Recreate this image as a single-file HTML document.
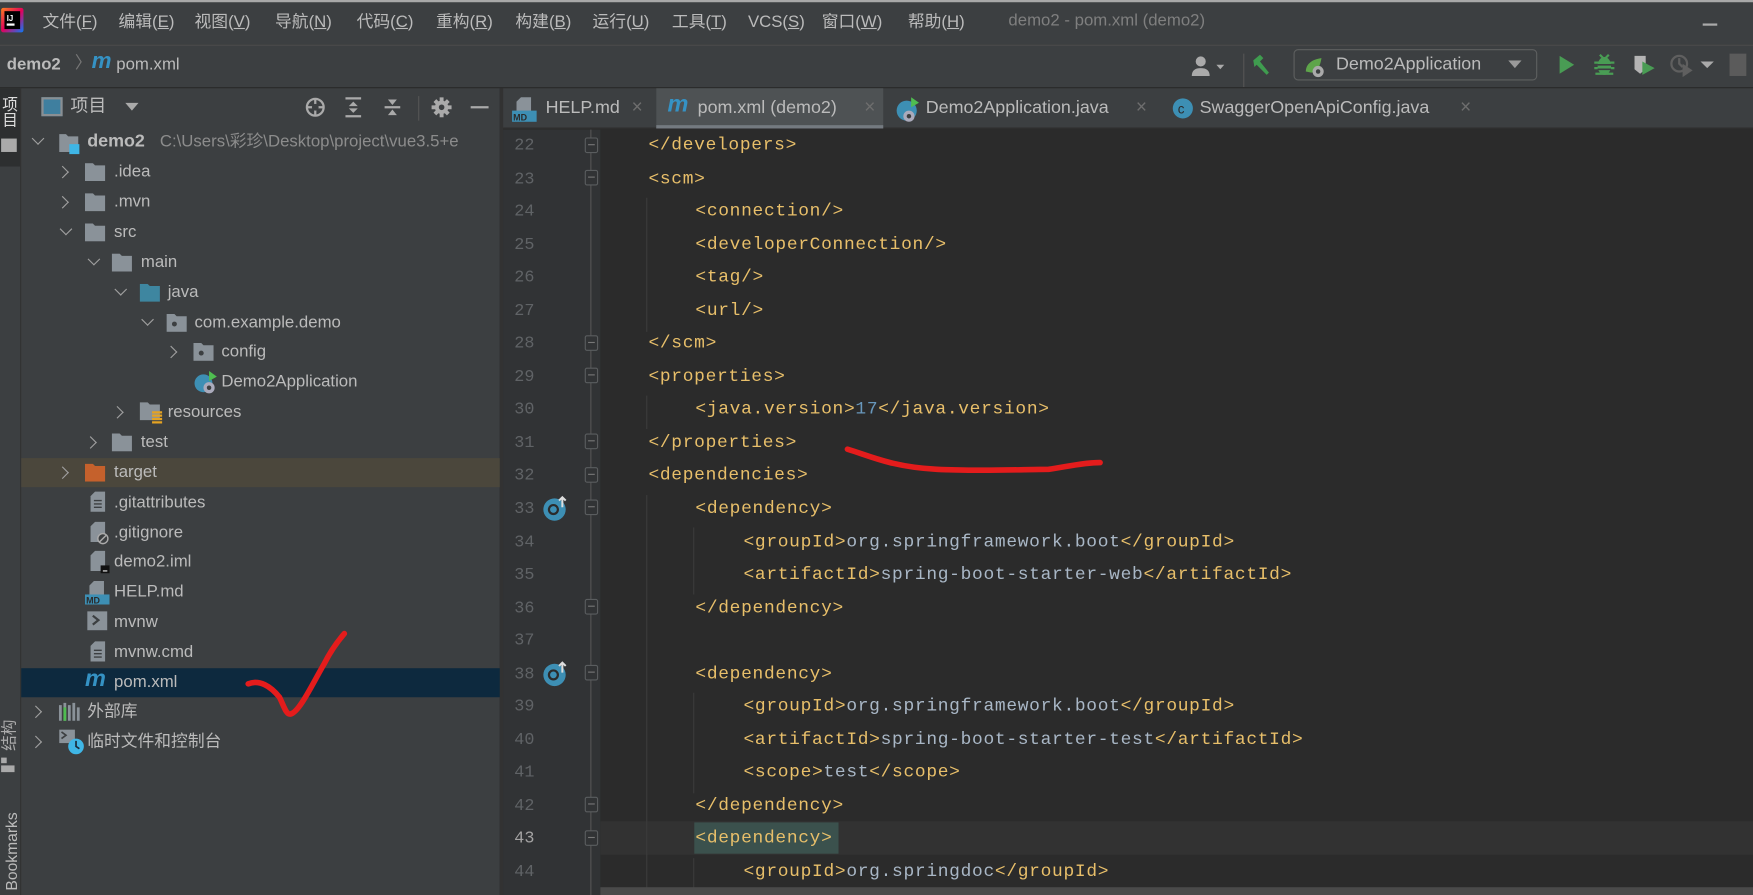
<!DOCTYPE html>
<html><head><meta charset="utf-8"><style>
*{margin:0;padding:0;box-sizing:border-box}
html,body{width:1753px;height:895px;overflow:hidden;background:#2b2b2b}
#w{position:absolute;left:0;top:0;width:1568px;height:801px;transform:scale(1.118,1.1174);transform-origin:0 0;background:#2b2b2b;font-family:"Liberation Sans","Noto Sans CJK SC",sans-serif;color:#bbbbbb;font-size:15px}
.a{position:absolute}
.t{position:absolute;white-space:nowrap;line-height:20px}
.mono{font-family:"Liberation Mono",monospace;font-size:16px;letter-spacing:0.62px;color:#e8bf6a}
.v{color:#a9b7c6}
.ln{position:absolute;left:452px;width:26px;text-align:right;font-family:"Liberation Mono",monospace;font-size:15px;color:#606366;line-height:20px}
.chev{position:absolute;width:8px;height:8px;border-right:1.6px solid #a0a0a0;border-bottom:1.6px solid #a0a0a0}
.cr{transform:rotate(-45deg)}
.cd{transform:rotate(45deg)}
.fold{position:absolute;left:523px;width:12px;height:14px;border:1.3px solid #5a5d5f;background:#313335;border-radius:2px}
.fold:after{content:"";position:absolute;left:2px;top:5px;width:6px;height:1.3px;background:#777}
</style></head><body><div id="w">
<!-- menu bar -->
<div class="a" style="left:0;top:0;width:1568px;height:40px;background:#3c3f41"></div>
<div class="a" style="left:0;top:0;width:1568px;height:2px;background:#a8a8a8"></div>
<div class="a" style="left:1px;top:7px;width:20px;height:22px;background:linear-gradient(135deg,#fc801d,#e3005b 50%,#087cfa);border-radius:2px"></div>
<div class="a" style="left:4px;top:10px;width:14px;height:16px;background:#000"></div>
<div class="a" style="left:6px;top:21px;width:7px;height:1.5px;background:#fff"></div>
<div class="t" style="left:6px;top:8px;font-size:7px;color:#fff;font-weight:bold">IJ</div>
<div class="t" style="left:38px;top:10px">文件(<u>F</u>)</div>
<div class="t" style="left:106px;top:10px">编辑(<u>E</u>)</div>
<div class="t" style="left:174px;top:10px">视图(<u>V</u>)</div>
<div class="t" style="left:246px;top:10px">导航(<u>N</u>)</div>
<div class="t" style="left:319px;top:10px">代码(<u>C</u>)</div>
<div class="t" style="left:390px;top:10px">重构(<u>R</u>)</div>
<div class="t" style="left:461px;top:10px">构建(<u>B</u>)</div>
<div class="t" style="left:530px;top:10px">运行(<u>U</u>)</div>
<div class="t" style="left:601px;top:10px">工具(<u>T</u>)</div>
<div class="t" style="left:669px;top:10px">VCS(<u>S</u>)</div>
<div class="t" style="left:735px;top:10px">窗口(<u>W</u>)</div>
<div class="t" style="left:812px;top:10px">帮助(<u>H</u>)</div>
<div class="t" style="left:902px;top:9px;color:#7f7f7f">demo2 - pom.xml (demo2)</div>
<div class="a" style="left:1523px;top:21px;width:13px;height:1.5px;background:#aaa"></div>
<div class="a" style="left:0;top:40px;width:1568px;height:1px;background:#515151"></div>
<!-- breadcrumb bar -->
<div class="a" style="left:0;top:41px;width:1568px;height:37px;background:#3c3f41"></div>
<div class="t" style="left:6px;top:48px;font-weight:bold;color:#bbb">demo2</div>
<div class="t" style="left:67px;top:47px;color:#777">〉</div>
<div class="t" style="left:82px;top:45px;color:#3592c4;font-weight:bold;font-style:italic;font-size:20px">m</div>
<div class="t" style="left:104px;top:48px">pom.xml</div>
<!-- toolbar right -->
<svg class="a" style="left:1062px;top:46px" width="40" height="28"><circle cx="12" cy="9" r="4.5" fill="#aaa"/><path d="M4 22c0-5 3-7 8-7s8 2 8 7z" fill="#aaa"/><path d="M26 12h7l-3.5 4z" fill="#aaa"/></svg>
<div class="a" style="left:1112px;top:48px;width:1px;height:30px;background:#555"></div>
<svg class="a" style="left:1118px;top:46px" width="24" height="26"><path d="M3 8l6-5 3 3-3 3 8 10-2 2-9-9-2 2z" fill="#3f9c4f"/></svg>
<div class="a" style="left:1157px;top:44px;width:218px;height:28px;border:1px solid #5e6060;border-radius:4px;background:#3c3f41"></div>
<svg class="a" style="left:1166px;top:49px" width="22" height="22"><path d="M2 15c0-7 6-11 14-12-1 6-3 12-9 13z" fill="#5ea54a"/><circle cx="13" cy="15" r="5" fill="#aaa"/><circle cx="13" cy="15" r="2" fill="#3c3f41"/></svg>
<div class="t" style="left:1195px;top:48px;font-size:16px">Demo2Application</div>
<svg class="a" style="left:1349px;top:54px" width="12" height="8"><path d="M0 0h12l-6 7z" fill="#9a9a9a"/></svg>
<svg class="a" style="left:1393px;top:49px" width="16" height="18"><path d="M2 1l13 8-13 8z" fill="#499c54"/></svg>
<svg class="a" style="left:1425px;top:47px" width="20" height="22"><ellipse cx="10" cy="12" rx="6" ry="8" fill="#499c54"/><path d="M1 9h18M1 14h18M2 19h16M6 2l3 3M14 2l-3 3" stroke="#499c54" stroke-width="2"/><path d="M4 11h12M4 15h12" stroke="#3c3f41" stroke-width="1.5"/></svg>
<svg class="a" style="left:1459px;top:47px" width="24" height="22"><path d="M3 3h10v12l-5 4-5-4z" fill="#b4b4b4"/><path d="M10 8l11 6-11 6z" fill="#499c54"/></svg>
<svg class="a" style="left:1492px;top:47px" width="26" height="24"><circle cx="10" cy="10" r="7" stroke="#5f5f5f" stroke-width="2" fill="none"/><path d="M10 5v5l3 3" stroke="#5f5f5f" stroke-width="2" fill="none"/><path d="M13 10l9 6-9 6z" fill="#5f5f5f"/></svg>
<svg class="a" style="left:1521px;top:55px" width="12" height="8"><path d="M0 0h12l-6 6z" fill="#aaa"/></svg>
<div class="a" style="left:1547px;top:48px;width:15px;height:20px;background:#5b5b5b"></div>
<div class="a" style="left:0;top:78px;width:1568px;height:1px;background:#2b2b2b"></div>
<!-- left stripe -->
<div class="a" style="left:0;top:79px;width:19px;height:722px;background:#3c3f41;border-right:1px solid #323232"></div>
<div class="a" style="left:0;top:79px;width:18px;height:70px;background:#2d2f30"></div>
<div class="a" style="left:0;top:86px;writing-mode:vertical-rl;font-size:14px;line-height:18px;color:#ddd">项目</div>
<div class="a" style="left:1px;top:124px;width:14px;height:12px;background:#aaa"></div>
<div class="t" style="left:-6px;top:648px;transform:rotate(-90deg);font-size:14px;color:#aaa">结构</div>
<div class="a" style="left:1px;top:678px;width:5px;height:5px;background:#aaa"></div><div class="a" style="left:1px;top:685px;width:12px;height:6px;background:#aaa"></div>
<div class="t" style="left:-32px;top:745px;transform:rotate(-90deg);font-size:14px;color:#bbb;width:84px">Bookmarks</div>
<!-- project panel -->
<div class="a" style="left:19px;top:79px;width:428px;height:722px;background:#3c3f41"></div>
<div class="a" style="left:447px;top:79px;width:3px;height:722px;background:#323232"></div>
<div class="a" style="left:37px;top:87px;width:19px;height:17px;border:2px solid #8a8f93;background:#3f7f9f"></div>
<div class="t" style="left:63px;top:86px;font-size:16px">项目</div>
<svg class="a" style="left:112px;top:92px" width="12" height="8"><path d="M0 0h12l-6 7z" fill="#aaa"/></svg>
<svg class="a" style="left:272px;top:86px" width="20" height="20"><circle cx="10" cy="10" r="7.5" stroke="#aaa" stroke-width="2" fill="none"/><path d="M10 2v16M2 10h16" stroke="#aaa" stroke-width="2"/><circle cx="10" cy="10" r="3" fill="#3c3f41"/></svg>
<svg class="a" style="left:307px;top:86px" width="18" height="20"><path d="M2 2h14M2 18h14" stroke="#aaa" stroke-width="2"/><path d="M9 5l-4 4h8zM9 15l-4-4h8z" fill="#aaa"/></svg>
<svg class="a" style="left:342px;top:86px" width="18" height="20"><path d="M2 10h14" stroke="#aaa" stroke-width="2"/><path d="M9 8l-4-5h8zM9 12l-4 5h8z" fill="#aaa"/></svg>
<div class="a" style="left:374px;top:86px;width:1px;height:22px;background:#555"></div>
<svg class="a" style="left:386px;top:87px" width="18" height="18"><circle cx="9" cy="9" r="6" fill="#aaa"/><path d="M9 0v18M0 9h18M3 3l12 12M15 3L3 15" stroke="#aaa" stroke-width="3.5"/><circle cx="9" cy="9" r="2.5" fill="#3c3f41"/></svg>
<div class="a" style="left:421px;top:95px;width:16px;height:2px;background:#aaa"></div>
<!-- highlights -->
<div class="a" style="left:19px;top:410px;width:428px;height:26px;background:#4b473c"></div>
<div class="a" style="left:19px;top:598px;width:428px;height:26px;background:#0d293e"></div>
<!-- tree rows -->
<div class="chev cd" style="left:30px;top:120px"></div>
<svg class="a" style="left:52px;top:118px" width="22" height="20"><path d="M1 2h6l2 2h9v14H1z" fill="#8a9299"/><rect x="10" y="11" width="9" height="9" fill="#3fb6e6"/></svg>
<div class="t" style="left:78px;top:117px;font-weight:bold;font-size:16px">demo2</div>
<div class="t" style="left:143px;top:117px;color:#8c8c8c">C:\Users\彩珍\Desktop\project\vue3.5+e</div>

<div class="chev cr" style="left:52px;top:150px"></div>
<svg class="a" style="left:76px;top:146px" width="20" height="16"><path d="M0 0h7l2 2h9v14H0z" fill="#8a9299"/></svg>
<div class="t" style="left:102px;top:144px">.idea</div>
<div class="chev cr" style="left:52px;top:177px"></div>
<svg class="a" style="left:76px;top:173px" width="20" height="16"><path d="M0 0h7l2 2h9v14H0z" fill="#8a9299"/></svg>
<div class="t" style="left:102px;top:171px">.mvn</div>
<div class="chev cd" style="left:55px;top:201px"></div>
<svg class="a" style="left:76px;top:200px" width="20" height="16"><path d="M0 0h7l2 2h9v14H0z" fill="#8a9299"/></svg>
<div class="t" style="left:102px;top:198px">src</div>
<div class="chev cd" style="left:80px;top:228px"></div>
<svg class="a" style="left:100px;top:227px" width="20" height="16"><path d="M0 0h7l2 2h9v14H0z" fill="#8a9299"/></svg>
<div class="t" style="left:126px;top:225px">main</div>
<div class="chev cd" style="left:104px;top:255px"></div>
<svg class="a" style="left:125px;top:254px" width="20" height="16"><path d="M0 0h7l2 2h9v14H0z" fill="#3e86a0"/></svg>
<div class="t" style="left:150px;top:252px">java</div>
<div class="chev cd" style="left:128px;top:282px"></div>
<svg class="a" style="left:149px;top:281px" width="20" height="16"><path d="M0 0h7l2 2h9v14H0z" fill="#8a9299"/><circle cx="7" cy="9" r="2.2" fill="#3c3f41"/></svg>
<div class="t" style="left:174px;top:279px">com.example.demo</div>
<div class="chev cr" style="left:149px;top:311px"></div>
<svg class="a" style="left:173px;top:307px" width="20" height="16"><path d="M0 0h7l2 2h9v14H0z" fill="#8a9299"/><circle cx="7" cy="9" r="2.2" fill="#3c3f41"/></svg>
<div class="t" style="left:198px;top:305px">config</div>
<svg class="a" style="left:173px;top:331px" width="22" height="22"><circle cx="9" cy="12" r="8" fill="#3d8fb4"/><path d="M14 1l7 5-7 4z" fill="#4fbd50"/><circle cx="14" cy="16" r="5" fill="#aab"/><circle cx="14" cy="16" r="2" fill="#3c3f41"/></svg>
<div class="t" style="left:198px;top:332px">Demo2Application</div>
<div class="chev cr" style="left:101px;top:365px"></div>
<svg class="a" style="left:125px;top:360px" width="22" height="22"><path d="M0 0h7l2 2h9v14H0z" fill="#8a9299"/><path d="M11 9h9M11 12h9M11 15h9M11 18h9" stroke="#e5a323" stroke-width="2"/></svg>
<div class="t" style="left:150px;top:359px">resources</div>
<div class="chev cr" style="left:77px;top:392px"></div>
<svg class="a" style="left:100px;top:388px" width="20" height="16"><path d="M0 0h7l2 2h9v14H0z" fill="#8a9299"/></svg>
<div class="t" style="left:126px;top:386px">test</div>
<div class="chev cr" style="left:52px;top:419px"></div>
<svg class="a" style="left:76px;top:415px" width="20" height="16"><path d="M0 0h7l2 2h9v14H0z" fill="#c5612c"/></svg>
<div class="t" style="left:102px;top:413px">target</div>

<svg class="a" style="left:80px;top:439px" width="16" height="20"><path d="M5 1h9v18H1V5z" fill="#8a9299"/><path d="M4 9h7M4 12h7M4 15h7" stroke="#3c3f41" stroke-width="1.2"/></svg>
<div class="t" style="left:102px;top:440px">.gitattributes</div>
<svg class="a" style="left:80px;top:466px" width="18" height="22"><path d="M5 1h9v18H1V5z" fill="#8a9299"/><circle cx="12" cy="16" r="4.5" fill="#3c3f41" stroke="#aaa" stroke-width="1.3"/><path d="M9 19l6-6" stroke="#aaa" stroke-width="1.3"/></svg>
<div class="t" style="left:102px;top:467px">.gitignore</div>
<svg class="a" style="left:80px;top:492px" width="18" height="22"><path d="M5 1h9v18H1V5z" fill="#8a9299"/><rect x="10" y="14" width="8" height="7" fill="#111"/><path d="M12 19h4" stroke="#eee"/></svg>
<div class="t" style="left:102px;top:493px">demo2.iml</div>
<svg class="a" style="left:76px;top:519px" width="22" height="22"><path d="M8 1h9v14H4V5z" fill="#8a9299"/><rect x="0" y="13" width="22" height="9" fill="#3d8fb4"/><text x="1" y="21" font-size="8" font-family="Liberation Sans" fill="#2b2b2b" font-weight="bold">MD</text></svg>
<div class="t" style="left:102px;top:520px">HELP.md</div>
<svg class="a" style="left:78px;top:547px" width="18" height="18"><rect width="18" height="17" fill="#8a9299"/><path d="M5 4l5 4-5 4" stroke="#3c3f41" stroke-width="2" fill="none"/></svg>
<div class="t" style="left:102px;top:547px">mvnw</div>
<svg class="a" style="left:80px;top:573px" width="16" height="22"><path d="M5 1h9v18H1V5z" fill="#8a9299"/><path d="M4 9h7M4 12h7M4 15h7" stroke="#3c3f41" stroke-width="1.2"/></svg>
<div class="t" style="left:102px;top:574px">mvnw.cmd</div>
<div class="t" style="left:76px;top:598px;color:#3592c4;font-weight:bold;font-style:italic;font-size:21px">m</div>
<div class="t" style="left:102px;top:601px">pom.xml</div>
<div class="chev cr" style="left:28px;top:633px"></div>
<svg class="a" style="left:52px;top:627px" width="22" height="20"><path d="M2 4v14M6 2v16M10 4v14M14 2v16M18 6v12" stroke="#8a9299" stroke-width="2.5"/><path d="M6 6v12" stroke="#4fbd50" stroke-width="2.5"/></svg>
<div class="t" style="left:78px;top:627px">外部库</div>
<div class="chev cr" style="left:28px;top:660px"></div>
<svg class="a" style="left:52px;top:652px" width="24" height="24"><rect x="1" y="1" width="14" height="12" fill="#8a9299"/><path d="M3 3l4 3-4 3" stroke="#3c3f41" stroke-width="1.5" fill="none"/><circle cx="16" cy="16" r="7" fill="#3fb6e6"/><path d="M16 11v5l3 2" stroke="#1a2a3a" stroke-width="1.5" fill="none"/></svg>
<div class="t" style="left:78px;top:654px">临时文件和控制台</div>

<!-- editor tabs -->
<div class="a" style="left:450px;top:79px;width:1118px;height:36px;background:#3c3f41;border-bottom:1px solid #323232"></div>
<div class="a" style="left:587px;top:79px;width:203px;height:36px;background:#4e5254"></div>
<div class="a" style="left:587px;top:112px;width:203px;height:3px;background:#747a80"></div>
<svg class="a" style="left:458px;top:86px" width="24" height="24"><path d="M8 1h9v14H4V5z" fill="#8a9299"/><rect x="0" y="13" width="22" height="10" fill="#3d8fb4"/><text x="1" y="22" font-size="8" font-family="Liberation Sans" fill="#2b2b2b" font-weight="bold">MD</text></svg>
<div class="t" style="left:488px;top:87px;font-size:16px">HELP.md</div>
<div class="t" style="left:565px;top:86px;color:#6e6e6e;font-size:17px">×</div>
<div class="t" style="left:597px;top:84px;color:#3592c4;font-weight:bold;font-style:italic;font-size:21px">m</div>
<div class="t" style="left:624px;top:87px;font-size:16px">pom.xml (demo2)</div>
<div class="t" style="left:773px;top:86px;color:#6e6e6e;font-size:17px">×</div>
<svg class="a" style="left:801px;top:85px" width="24" height="26"><circle cx="10" cy="14" r="9" fill="#3d8fb4"/><path d="M14 2l7 5-7 4z" fill="#4fbd50"/><circle cx="12" cy="19" r="5" fill="#aab"/><circle cx="12" cy="19" r="2" fill="#3c3f41"/></svg>
<div class="t" style="left:828px;top:87px;font-size:16px">Demo2Application.java</div>
<div class="t" style="left:1016px;top:86px;color:#6e6e6e;font-size:17px">×</div>
<svg class="a" style="left:1048px;top:87px" width="20" height="20"><circle cx="10" cy="10" r="9" fill="#3d8fb4"/><text x="5.5" y="14.5" font-size="12" font-family="Liberation Sans" fill="#2b2b2b">c</text></svg>
<div class="t" style="left:1073px;top:87px;font-size:16px">SwaggerOpenApiConfig.java</div>
<div class="t" style="left:1306px;top:86px;color:#6e6e6e;font-size:17px">×</div>

<!-- editor -->
<div class="a" style="left:450px;top:116px;width:87px;height:685px;background:#313335"></div>
<div class="a" style="left:528px;top:116px;width:1.3px;height:685px;background:#555"></div>
<div class="a" style="left:537px;top:735px;width:1031px;height:30px;background:#323232"></div>
<div class="a" style="left:621px;top:736px;width:129px;height:28px;background:#3b514d"></div>
<!-- indent guides -->
<div class="a" style="left:578px;top:177px;width:1px;height:120px;background:#3b3b3b"></div>
<div class="a" style="left:578px;top:354px;width:1px;height:30px;background:#3b3b3b"></div>
<div class="a" style="left:578px;top:443px;width:1px;height:358px;background:#3b3b3b"></div>
<div class="a" style="left:620px;top:472px;width:1px;height:60px;background:#3b3b3b"></div>
<div class="a" style="left:620px;top:620px;width:1px;height:90px;background:#3b3b3b"></div>
<div class="a" style="left:620px;top:768px;width:1px;height:33px;background:#3b3b3b"></div>

<div class="ln" style="top:121px">22</div><div class="ln" style="top:151px">23</div><div class="ln" style="top:180px">24</div><div class="ln" style="top:210px">25</div><div class="ln" style="top:239px">26</div><div class="ln" style="top:269px">27</div><div class="ln" style="top:298px">28</div><div class="ln" style="top:328px">29</div><div class="ln" style="top:357px">30</div><div class="ln" style="top:387px">31</div><div class="ln" style="top:416px">32</div><div class="ln" style="top:446px">33</div><div class="ln" style="top:476px">34</div><div class="ln" style="top:505px">35</div><div class="ln" style="top:535px">36</div><div class="ln" style="top:564px">37</div><div class="ln" style="top:594px">38</div><div class="ln" style="top:623px">39</div><div class="ln" style="top:653px">40</div><div class="ln" style="top:682px">41</div><div class="ln" style="top:712px">42</div><div class="ln" style="top:741px;color:#a4a3a3">43</div><div class="ln" style="top:771px">44</div>

<div class="fold" style="top:123px"></div><div class="fold" style="top:152px"></div><div class="fold" style="top:300px"></div><div class="fold" style="top:329px"></div><div class="fold" style="top:388px"></div><div class="fold" style="top:418px"></div><div class="fold" style="top:447px"></div><div class="fold" style="top:536px"></div><div class="fold" style="top:595px"></div><div class="fold" style="top:713px"></div><div class="fold" style="top:743px"></div>

<svg class="a" style="left:485px;top:442px" width="26" height="26"><circle cx="11" cy="14" r="10" fill="#3d8fb4"/><circle cx="10" cy="14" r="4" stroke="#2b2b2b" stroke-width="2" fill="none"/><path d="M18 12V3M15 6l3-3 3 3" stroke="#ddd" stroke-width="1.8" fill="none"/></svg>
<svg class="a" style="left:485px;top:590px" width="26" height="26"><circle cx="11" cy="14" r="10" fill="#3d8fb4"/><circle cx="10" cy="14" r="4" stroke="#2b2b2b" stroke-width="2" fill="none"/><path d="M18 12V3M15 6l3-3 3 3" stroke="#ddd" stroke-width="1.8" fill="none"/></svg>

<div class="t mono" style="left:580px;top:120px">&lt;/developers&gt;</div>
<div class="t mono" style="left:580px;top:150px">&lt;scm&gt;</div>
<div class="t mono" style="left:622px;top:179px">&lt;connection/&gt;</div>
<div class="t mono" style="left:622px;top:209px">&lt;developerConnection/&gt;</div>
<div class="t mono" style="left:622px;top:238px">&lt;tag/&gt;</div>
<div class="t mono" style="left:622px;top:268px">&lt;url/&gt;</div>
<div class="t mono" style="left:580px;top:297px">&lt;/scm&gt;</div>
<div class="t mono" style="left:580px;top:327px">&lt;properties&gt;</div>
<div class="t mono" style="left:622px;top:356px">&lt;java.version&gt;<span style="color:#6897bb">17</span>&lt;/java.version&gt;</div>
<div class="t mono" style="left:580px;top:386px">&lt;/properties&gt;</div>
<div class="t mono" style="left:580px;top:415px">&lt;dependencies&gt;</div>
<div class="t mono" style="left:622px;top:445px">&lt;dependency&gt;</div>
<div class="t mono" style="left:665px;top:475px">&lt;groupId&gt;<span class="v">org.springframework.boot</span>&lt;/groupId&gt;</div>
<div class="t mono" style="left:665px;top:504px">&lt;artifactId&gt;<span class="v">spring-boot-starter-web</span>&lt;/artifactId&gt;</div>
<div class="t mono" style="left:622px;top:534px">&lt;/dependency&gt;</div>
<div class="t mono" style="left:622px;top:593px">&lt;dependency&gt;</div>
<div class="t mono" style="left:665px;top:622px">&lt;groupId&gt;<span class="v">org.springframework.boot</span>&lt;/groupId&gt;</div>
<div class="t mono" style="left:665px;top:652px">&lt;artifactId&gt;<span class="v">spring-boot-starter-test</span>&lt;/artifactId&gt;</div>
<div class="t mono" style="left:665px;top:681px">&lt;scope&gt;<span class="v">test</span>&lt;/scope&gt;</div>
<div class="t mono" style="left:622px;top:711px">&lt;/dependency&gt;</div>
<div class="t mono" style="left:622px;top:740px">&lt;dependency&gt;</div>
<div class="t mono" style="left:665px;top:770px">&lt;groupId&gt;<span class="v">org.springdoc</span>&lt;/groupId&gt;</div>

<div class="a" style="left:537px;top:794px;width:1031px;height:7px;background:#4a4a4a"></div>
<!-- red marks -->
<svg class="a" style="left:0;top:0" width="1568" height="801"><path d="M758 402c20 6 40 16 80 18c40 2 80 0 100 0c15-2 30-6 46-6" stroke="#e41c1c" stroke-width="5" fill="none" stroke-linecap="round"/><path d="M222 612c10-4 20 2 28 12c4 8 6 16 10 15c8-2 20-28 30-45c6-12 12-20 18-27" stroke="#e41c1c" stroke-width="5" fill="none" stroke-linecap="round" stroke-linejoin="round"/></svg>
</div></body></html>
